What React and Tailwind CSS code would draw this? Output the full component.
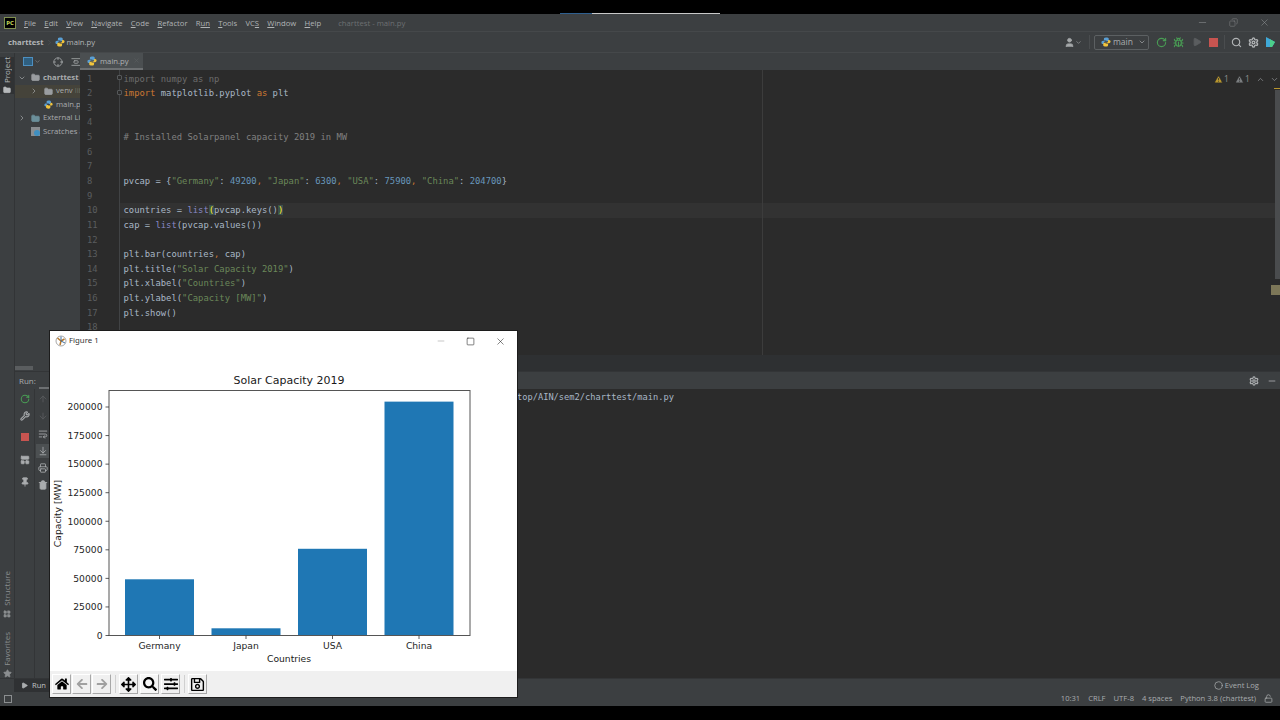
import {
  ChevronDown,
  ChevronRight,
  ChevronUp,
  ArrowUp,
  ArrowDown,
  Crosshair,
  AlignVerticalSpaceAround,
  Folder,
  Minus,
  Copy,
  X,
  Square,
  Search,
  Settings,
  Bug,
  RotateCw,
  Wrench,
  Pin,
  Printer,
  Trash2,
  WrapText,
  ArrowDownToLine,
  LayoutPanelTop,
  Play,
  Star,
  LayoutGrid,
  User,
  TriangleAlert,
  LockOpen,
  Circle,
} from "lucide-react";
import { FaHome, FaArrowLeft, FaArrowRight, FaArrowsAlt, FaSearch, FaSlidersH, FaRegSave } from "react-icons/fa";

const menuItems = [
  ["F", "ile"],
  ["E", "dit"],
  ["V", "iew"],
  ["N", "avigate"],
  ["C", "ode"],
  ["R", "efactor"],
  ["R", "un", true],
  ["T", "ools"],
  ["VC", "S", true],
  ["W", "indow"],
  ["H", "elp"],
];

const K = ({ children }) => <span className="text-[#cc7832]">{children}</span>;
const S = ({ children }) => <span className="text-[#6a8759]">{children}</span>;
const N = ({ children }) => <span className="text-[#6897bb]">{children}</span>;
const B = ({ children }) => <span className="text-[#8888c6]">{children}</span>;

const codeLines = [
  <span className="text-[#6c6c6c]">import numpy as np</span>,
  <>
    <K>import</K> matplotlib.pyplot <K>as</K> plt
  </>,
  "",
  "",
  <span className="text-[#808080]"># Installed Solarpanel capacity 2019 in MW</span>,
  "",
  "",
  <>
    pvcap = {"{"}
    <S>"Germany"</S>: <N>49200</N>
    <K>,</K> <S>"Japan"</S>: <N>6300</N>
    <K>,</K> <S>"USA"</S>: <N>75900</N>
    <K>,</K> <S>"China"</S>: <N>204700</N>
    {"}"}
  </>,
  "",
  <>
    countries = <B>list</B>
    <span className="bg-[#3b514d] text-[#ffef28]">(</span>pvcap.keys()
    <span className="bg-[#3b514d] text-[#ffef28]">)</span>
  </>,
  <>
    cap = <B>list</B>(pvcap.values())
  </>,
  "",
  <>
    plt.bar(countries<K>,</K> cap)
  </>,
  <>
    plt.title(<S>"Solar Capacity 2019"</S>)
  </>,
  <>
    plt.xlabel(<S>"Countries"</S>)
  </>,
  <>
    plt.ylabel(<S>"Capacity [MW]"</S>)
  </>,
  "plt.show()",
  "",
  "",
  "",
];

const bars = [
  { name: "Germany", x: 125, w: 69, value: 49200 },
  { name: "Japan", x: 211.5, w: 69, value: 6300 },
  { name: "USA", x: 298, w: 69, value: 75900 },
  { name: "China", x: 384.5, w: 69, value: 204700 },
];
const yTicks = [0, 25000, 50000, 75000, 100000, 125000, 150000, 175000, 200000];
const yPos = (v) => 635.5 - v * 0.0011425;

function PyIcon({ size = 10 }) {
  return (
    <svg width={size} height={size} viewBox="0 0 12 12" className="shrink-0">
      <path d="M6 .5C3.5.5 3.5 1.5 3.5 3v1H6.5v.6H2.5C1 4.6.5 5.5.5 6.5s.6 2 2 2h1V7c0-1 .8-1.8 2-1.8h2.5c.8 0 1.3-.6 1.3-1.4V2.2C9.3 1 8 .5 6 .5z" fill="#5a9fd4" />
      <path d="M6 11.5c2.5 0 2.5-1 2.5-2.5V8H5.5v-.6h4c1.5 0 2-.9 2-1.9s-.6-2-2-2h-1V5c0 1-.8 1.8-2 1.8H4c-.8 0-1.3.6-1.3 1.4v1.6C2.7 11 4 11.5 6 11.5z" fill="#f2c53d" />
    </svg>
  );
}

function ToolButton({ children, muted, active }) {
  return (
    <div
      className={`w-[19px] h-[20px] flex items-center justify-center border border-t-white border-l-white border-r-[#a8a8a8] border-b-[#a8a8a8] ${
        muted ? "text-[#a0a0a0]" : "text-black"
      } ${active ? "bg-[#f6f6f6]" : ""}`}
    >
      {children}
    </div>
  );
}

function VerticalLabel({ children }) {
  return <span className="[writing-mode:vertical-rl] rotate-180 text-[8px] leading-none">{children}</span>;
}

export default function App() {
  return (
    <div className="relative w-[1280px] h-[720px] bg-black overflow-hidden flex flex-col font-['Open_Sans',sans-serif] text-[#a9b7c6]">
      {/* Top letterbox and the loader line */}
      <div className="h-[14px] flex items-end pl-[560px] shrink-0">
        <div className="w-[32px] h-px bg-[#2f5f8f]" />
        <div className="w-[128px] h-px bg-[#c8c8c8]" />
      </div>

      {/* Menu bar */}
      <div className="h-[18px] shrink-0 bg-[#3c3f41] flex items-center pt-[2px] border-b border-[#45484a] text-[7.7px] text-[#b0b3b5]">
        <div className="ml-[4px] -mt-[2px] w-[12px] h-[12px] bg-black border border-[#7f8f4f] flex items-center justify-center text-[6px] font-bold text-[#cfe060] leading-none">
          PC
        </div>
        <div className="ml-[8px] flex gap-[8.2px]">
          {menuItems.map(([a, b, second]) =>
            second ? (
              <span key={a + b}>
                {a}
                <span className="underline">{b}</span>
              </span>
            ) : (
              <span key={a + b}>
                <span className="underline">{a}</span>
                {b}
              </span>
            )
          )}
        </div>
        <span className="ml-[17px] text-[#6d7072]">charttest - main.py</span>
        <div className="ml-auto mr-[10px] -mt-[2px] flex items-center gap-[21px] text-[#8f9294]">
          <Minus size={11} strokeWidth={1.2} />
          <Copy size={9} strokeWidth={1.2} className="-scale-x-100" />
          <X size={11} strokeWidth={1.2} />
        </div>
      </div>

      {/* Navigation bar */}
      <div className="h-[21px] shrink-0 bg-[#3c3f41] border-b border-[#45484a] flex items-center text-[7.7px]">
        <span className="ml-[8px] pt-[2px] font-bold text-[#b3b6b8]">charttest</span>
        <ChevronRight size={9} strokeWidth={1} className="ml-[1px] text-[#5b5e60]" />
        <div className="ml-[1px]">
          <PyIcon size={10} />
        </div>
        <span className="ml-[2px] pt-[2px] text-[#b3b6b8]">main.py</span>
        <div className="ml-auto flex items-center pr-[4px]">
          <User size={11} fill="#a5a8aa" className="text-[#a5a8aa]" />
          <ChevronDown size={7} className="text-[#a5a8aa]" />
          <div className="ml-[7px] w-px h-[14px] bg-[#4a4d4f]" />
          <div className="ml-[4px] w-[55px] h-[15px] border border-[#5c6062] rounded-[2px] flex items-center pl-[6px] gap-[2px] text-[8.5px] text-[#a9acae]">
            <PyIcon size={10} />
            <span>main</span>
            <ChevronDown size={8} className="ml-[3px]" />
          </div>
          <RotateCw size={11} strokeWidth={2.5} className="ml-[7px] text-[#499c54]" />
          <Bug size={11} strokeWidth={2.5} className="ml-[6px] text-[#499c54]" />
          <Play size={10} className="ml-[8px] text-[#5a5d5f]" fill="#5a5d5f" />
          <div className="ml-[7px] w-[9px] h-[9px] bg-[#c75450]" />
          <div className="ml-[6px] w-px h-[14px] bg-[#4a4d4f]" />
          <Search size={11} strokeWidth={2.5} className="ml-[6px] text-[#b0b3b5]" />
          <Settings size={11} strokeWidth={3} className="ml-[6px] text-[#b0b3b5]" />
          <svg width="11" height="11" viewBox="0 0 11 11" className="ml-[6px]">
            <path d="M1 0l9 5-3 5H1z" fill="#3fa9d8" />
            <path d="M5 2.2l5 2.8-3 5H5z" fill="#4cd08a" />
          </svg>
        </div>
      </div>

      {/* Body */}
      <div className="h-[625px] shrink-0 flex bg-[#3c3f41]">
        {/* Left tool stripe */}
        <div className="w-[15px] shrink-0 border-r border-[#323436] flex flex-col items-center text-[#8b8e90]">
          <div className="mt-[4px] w-full h-[38px] bg-[#303234] flex flex-col items-center justify-center gap-[3px] text-[#b5b8ba]">
            <VerticalLabel>Project</VerticalLabel>
            <Folder size={8} fill="#b5b8ba" />
          </div>
          <div className="mt-[477px] flex flex-col items-center gap-[4px]">
            <VerticalLabel>Structure</VerticalLabel>
            <LayoutGrid size={8} fill="#8b8e90" />
          </div>
          <div className="mt-[14px] flex flex-col items-center gap-[3px]">
            <VerticalLabel>Favorites</VerticalLabel>
            <Star size={9} fill="#8b8e90" />
          </div>
        </div>

        <div className="flex-1 min-w-0 flex flex-col">
          {/* Project panel + editor */}
          <div className="h-[318px] shrink-0 flex">
            <div className="w-[65px] shrink-0 overflow-hidden flex flex-col text-[7.7px] text-[#a9acae]">
              <div className="h-[17px] flex items-center pl-[8px] gap-[1px]">
                <div className="w-[10px] h-[9px] shrink-0 border-[1.5px] border-[#4d8fc0] bg-[#2f5f80]" />
                <ChevronDown size={7} className="shrink-0 text-[#8b8e90]" />
                <Crosshair size={10} className="ml-[11px] shrink-0 text-[#a5a8aa]" />
                <AlignVerticalSpaceAround size={10} className="ml-[7px] shrink-0 text-[#a5a8aa]" />
              </div>
              <div className="mt-[1px] flex flex-col whitespace-nowrap">
                <div className="h-[13.5px] flex items-center pl-[3px] font-bold">
                  <ChevronDown size={8} className="shrink-0" />
                  <Folder size={9} fill="#9a9da0" className="ml-[5px] shrink-0 text-[#9a9da0]" />
                  <span className="ml-[3px]">charttest</span>
                </div>
                <div className="h-[13.5px] flex items-center pl-[15px] bg-[#45433a]">
                  <ChevronRight size={8} className="shrink-0" />
                  <Folder size={9} fill="#9a9da0" className="ml-[6px] shrink-0 text-[#9a9da0]" />
                  <span className="ml-[3px]">
                    venv <span className="text-[#6d6f60]">library root</span>
                  </span>
                </div>
                <div className="h-[13.5px] flex items-center pl-[29px] gap-[3px]">
                  <PyIcon size={9} />
                  main.py
                </div>
                <div className="h-[13.5px] flex items-center pl-[3px]">
                  <ChevronRight size={8} className="shrink-0" />
                  <Folder size={9} fill="#6b8f9a" className="ml-[5px] shrink-0 text-[#6b8f9a]" />
                  <span className="ml-[3px]">External Libraries</span>
                </div>
                <div className="h-[13.5px] flex items-center pl-[16px] gap-[3px]">
                  <div className="relative w-[9px] h-[9px] shrink-0 bg-[#8a8d90]">
                    <div className="absolute right-0 bottom-0 w-[6px] h-[6px] rounded-full bg-[#3f8fc0]" />
                  </div>
                  Scratches and Consoles
                </div>
              </div>
              <div className="mt-auto mb-px w-[18px] h-[4px] bg-[#5a5d5f]" />
            </div>

            <div className="flex-1 min-w-0 flex flex-col">
              <div className="h-[17px] shrink-0 flex">
                <div className="w-[63px] bg-[#4b4f51] border-b-2 border-[#6d7072] flex items-center pl-[7px] gap-[3px] text-[7.7px] text-[#b0b3b5]">
                  <PyIcon size={10} />
                  <span className="pt-[2px]">main.py</span>
                  <X size={7} className="ml-[1px] text-[#5c5f61]" />
                </div>
              </div>
              <div className="relative h-[285px] shrink-0 bg-[#2b2b2b] overflow-hidden flex font-['DejaVu_Sans_Mono',monospace] text-[8.86px]">
                <div className="relative w-[40px] shrink-0 border-r border-[#414345] text-[#5a5d5f] pt-[1.5px]">
                  {codeLines.map((_, i) => (
                    <div key={i} className="h-[14.65px] leading-[14.65px] pl-[7px]">
                      {i + 1}
                    </div>
                  ))}
                  <div className="absolute right-[-3px] top-[5px] w-[5px] h-[5px] rounded-[1px] border border-[#55585a] bg-[#2b2b2b]" />
                  <div className="absolute right-[-3px] top-[20px] w-[5px] h-[5px] rounded-[1px] border border-[#55585a] bg-[#2b2b2b]" />
                </div>
                <div className="relative flex-1 min-w-0 pt-[1.5px]">
                  <div className="absolute left-[642px] top-0 bottom-0 w-px bg-[#3c3c3c]" />
                  {codeLines.map((line, i) => (
                    <div
                      key={i}
                      className={`h-[14.65px] leading-[14.65px] pl-[3.5px] whitespace-pre ${i === 9 ? "bg-[#323232]" : ""}`}
                    >
                      {line}
                    </div>
                  ))}
                </div>
                {/* Inspection widget and scrollbar */}
                <div className="absolute right-0 top-[2px] h-[14px] w-[66px] flex items-center font-['Open_Sans',sans-serif] text-[8.5px] text-[#8b8e90]">
                  <TriangleAlert size={9} fill="#b8962e" className="text-[#2b2b2b]" />
                  <span className="ml-[1px]">1</span>
                  <TriangleAlert size={9} fill="#7b7e80" className="ml-[6px] text-[#2b2b2b]" />
                  <span className="ml-[1px]">1</span>
                  <ChevronUp size={9} className="ml-[6px]" />
                  <ChevronDown size={9} className="ml-[5px]" />
                </div>
                <div className="absolute right-0 top-[18px] w-[6px] h-px bg-[#b8962e]" />
                <div className="absolute right-0 top-[20px] w-[5px] h-[189px] bg-[#4a4c4e]" />
                <div className="absolute right-0 top-[215px] w-[9px] h-[10px] bg-[#7d7758]" />
              </div>
              <div className="flex-1 bg-[#2e3032]" />
            </div>
          </div>

          {/* Run tool window */}
          <div className="relative h-[18px] shrink-0 flex items-center border-t border-[#333537] text-[8px] text-[#a9acae]">
            <span className="ml-[4px]">Run:</span>
            <div className="absolute left-[24px] bottom-0 w-[12px] h-[2px] bg-[#6d7072]" />
            <div className="ml-auto mr-[3px] flex items-center gap-[8px] text-[#a9acae]">
              <Settings size={10} strokeWidth={3} />
              <Minus size={10} strokeWidth={2} />
            </div>
          </div>
          <div className="flex-1 min-h-0 flex">
            <div className="w-[20px] shrink-0 border-r border-[#333537] flex flex-col items-center pt-[5px] text-[#a9acae]">
              <RotateCw size={10} strokeWidth={2.5} className="text-[#499c54]" />
              <Wrench size={10} strokeWidth={2.5} className="mt-[7px]" />
              <div className="mt-[12px] w-[8px] h-[8px] bg-[#c75450]" />
              <LayoutPanelTop size={10} fill="#a9acae" className="mt-[14px]" />
              <Pin size={10} fill="#a9acae" className="mt-[12px]" />
            </div>
            <div className="w-[30px] shrink-0 flex flex-col pt-[5px] gap-[7.3px] pl-[3px] text-[#a9acae]">
              <ArrowUp size={10} className="text-[#5a5d5f]" />
              <ArrowDown size={10} className="text-[#5a5d5f]" />
              <WrapText size={10} />
              <div className="-ml-[2px] -my-[2px] w-[14px] h-[14px] bg-[#4c5052] flex items-center justify-center">
                <ArrowDownToLine size={10} />
              </div>
              <Printer size={10} />
              <Trash2 size={10} fill="#a9acae" />
            </div>
            <div className="flex-1 min-w-0 bg-[#2b2b2b] overflow-hidden pt-[1px] whitespace-nowrap font-['DejaVu_Sans_Mono',monospace] text-[8.7px] leading-[14px] text-[#a9b7c6] pl-[452px]">
              top/AIN/sem2/charttest/main.py
            </div>
          </div>
        </div>
      </div>

      {/* Tool tabs and status bar */}
      <div className="h-[14px] shrink-0 bg-[#3c3f41] border-t border-[#333537] flex items-center text-[7.6px] text-[#a9acae]">
        <div className="ml-[14px] w-[40px] h-full bg-[#2f3133] flex items-center pl-[7px] gap-[4px] text-[#c0c3c5]">
          <Play size={7} fill="#a9acae" />
          Run
        </div>
        <div className="ml-auto mr-[21px] flex items-center gap-[2px]">
          <Circle size={9} />
          Event Log
        </div>
      </div>
      <div className="h-[14px] shrink-0 bg-[#3c3f41] flex items-center text-[7.6px] text-[#a9acae]">
        <div className="ml-[4px] w-[8px] h-[8px] border border-[#8b8e90]" />
        <div className="ml-auto mr-[7px] flex items-center gap-[8px]">
          <span>10:31</span>
          <span>CRLF</span>
          <span>UTF-8</span>
          <span>4 spaces</span>
          <span>Python 3.8 (charttest)</span>
          <LockOpen size={9} />
        </div>
      </div>
      <div className="flex-1" />

      {/* Floating matplotlib figure */}
      <div className="absolute left-[50px] top-[331px] w-[467px] h-[366px] bg-white flex flex-col shadow-[0_0_0_1px_#1c1c1c]">
        <div className="h-[20px] shrink-0 flex items-center text-[7.8px] text-[#333] font-['Noto_Sans',sans-serif]">
          <svg width="12" height="12" viewBox="0 0 12 12" className="ml-[5px]">
            <circle cx="6" cy="6" r="5" fill="none" stroke="#a8a8a8" />
            <path d="M6 6L2.5 3M6 6L9.5 4M6 6L5 10" stroke="#b5762a" strokeWidth="1.5" />
            <path d="M6 6L6 1.5M6 6L10 8" stroke="#3f6f9f" strokeWidth="1" />
          </svg>
          <span className="ml-[2px]">Figure 1</span>
          <div className="ml-auto flex items-center gap-[20px] pr-[11px] text-[#222]">
            <Minus size={10} strokeWidth={1} className="text-[#777]" />
            <Square size={9} strokeWidth={1.5} />
            <X size={11} strokeWidth={1.2} />
          </div>
        </div>

        <svg viewBox="50 351 467 320" className="w-[467px] h-[320px] shrink-0 font-['DejaVu_Sans',sans-serif]">
          {bars.map((b) => (
            <rect key={b.name} x={b.x} y={yPos(b.value)} width={b.w} height={635.5 - yPos(b.value)} fill="#1f77b4" />
          ))}
          <rect x="109" y="390.5" width="361" height="245" fill="none" stroke="#555" strokeWidth="1" />
          {yTicks.map((t) => (
            <g key={t}>
              <line x1="105.5" x2="109" y1={yPos(t)} y2={yPos(t)} stroke="#333" strokeWidth="0.8" />
              <text x="102.5" y={yPos(t) + 3.3} textAnchor="end" fontSize="9.2" fill="#262626">
                {t}
              </text>
            </g>
          ))}
          {bars.map((b) => (
            <g key={b.name}>
              <line x1={b.x + b.w / 2} x2={b.x + b.w / 2} y1="635.5" y2="639" stroke="#333" strokeWidth="0.8" />
              <text x={b.x + b.w / 2} y="649" textAnchor="middle" fontSize="9.2" fill="#262626">
                {b.name}
              </text>
            </g>
          ))}
          <text x="289" y="384" textAnchor="middle" fontSize="11" fill="#1a1a1a">
            Solar Capacity 2019
          </text>
          <text x="289" y="662" textAnchor="middle" fontSize="9.2" fill="#1a1a1a">
            Countries
          </text>
          <text x="0" y="0" transform="translate(61 513.5) rotate(-90)" textAnchor="middle" fontSize="9.2" fill="#1a1a1a">
            Capacity [MW]
          </text>
        </svg>

        <div className="flex-1 bg-[#f0f0f0] flex items-center pl-[2px]">
          <div className="flex gap-[1px]">
            <ToolButton>
              <FaHome size={14} />
            </ToolButton>
            <ToolButton muted>
              <FaArrowLeft size={12} />
            </ToolButton>
            <ToolButton muted>
              <FaArrowRight size={12} />
            </ToolButton>
          </div>
          <div className="ml-[4px] mr-[3px] w-px h-[18px] bg-[#d0d0d0]" />
          <div className="flex gap-[2px]">
            <ToolButton>
              <FaArrowsAlt size={15} />
            </ToolButton>
            <ToolButton active>
              <FaSearch size={14} />
            </ToolButton>
            <ToolButton>
              <FaSlidersH size={14} />
            </ToolButton>
          </div>
          <div className="ml-[4px] mr-[3px] w-px h-[18px] bg-[#d0d0d0]" />
          <ToolButton>
            <FaRegSave size={15} />
          </ToolButton>
        </div>
      </div>
    </div>
  );
}
